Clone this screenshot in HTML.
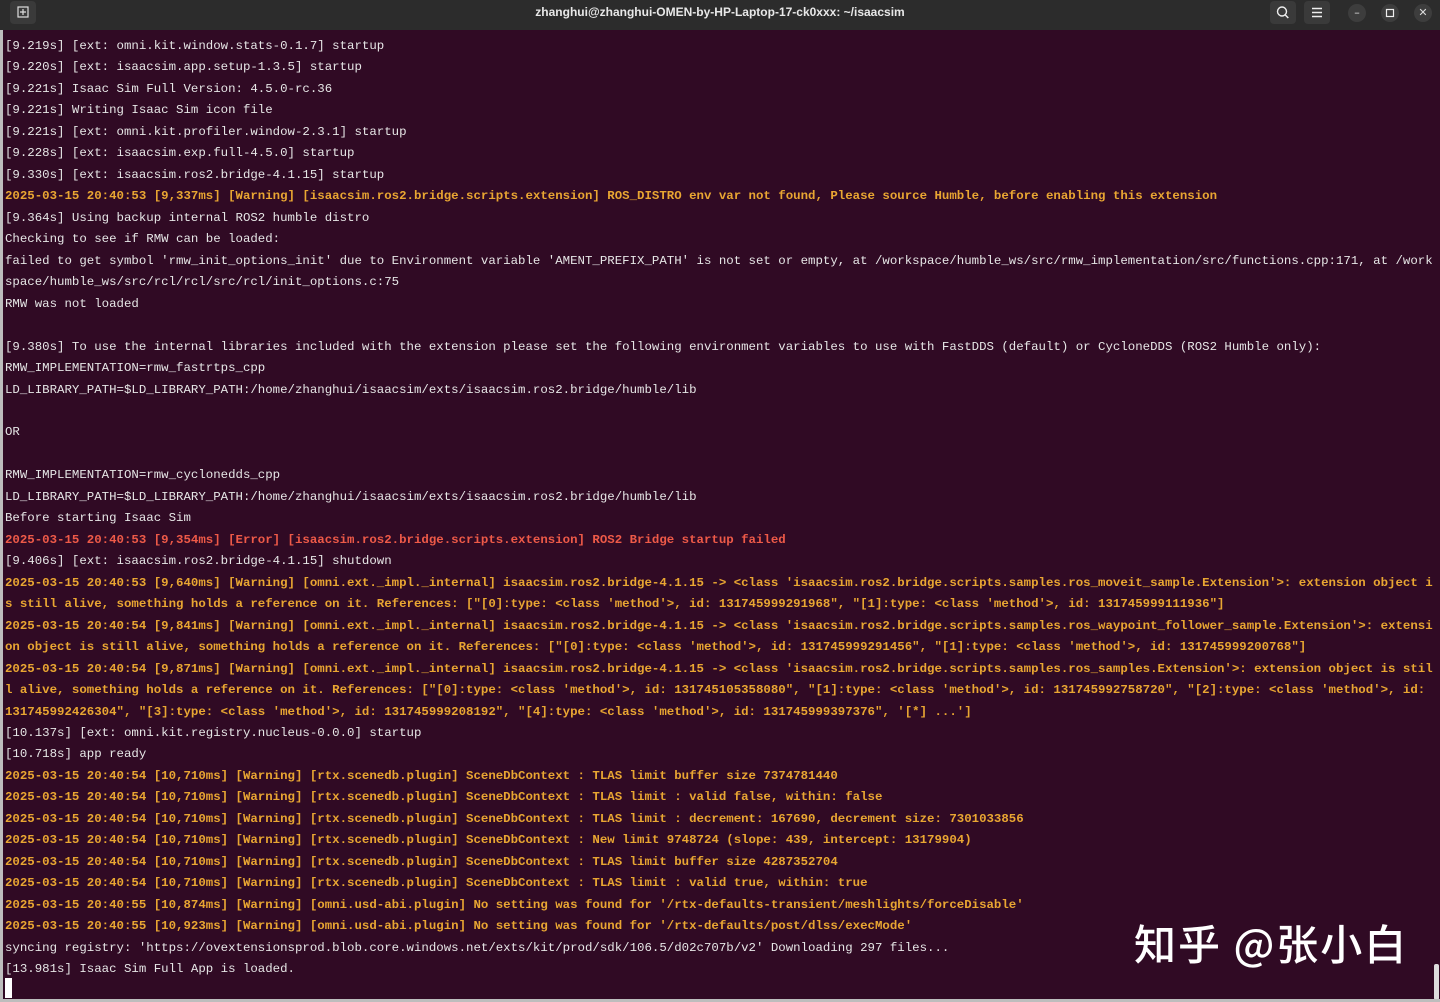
<!DOCTYPE html>
<html><head><meta charset="utf-8"><style>
html,body{margin:0;padding:0;}
body{width:1440px;height:1002px;background:#300a24;position:relative;overflow:hidden;font-family:"Liberation Mono","DejaVu Sans Mono",monospace;}
.tb{position:absolute;left:0;top:0;width:1440px;height:30px;background:#2c2c2c;}
.title{position:absolute;left:0;right:0;top:0;height:24px;line-height:24px;text-align:center;color:#e8e8e8;font:bold 12px "Liberation Sans","DejaVu Sans",sans-serif;}
.btn{position:absolute;top:1px;width:26px;height:23px;background:#3a3a3a;border-radius:4px;}
.cb{position:absolute;top:4px;width:18px;height:18px;border-radius:50%;background:#3d3d3d;color:#ddd;font:11px "DejaVu Sans",sans-serif;text-align:center;line-height:18px;}
.term{position:absolute;left:5px;top:36px;font-size:12.4px;line-height:21.47px;color:#e6e6e6;white-space:pre;}
.w{color:#e9a632;font-weight:bold;}
.e{color:#ee5a48;font-weight:bold;}
.edge{position:absolute;left:0;top:30px;width:3px;height:972px;background:#bdbdbd;}
.wm{position:absolute;left:1134px;top:912px;color:#fff;font:500 42px "Noto Sans CJK SC","WenQuanYi Zen Hei",sans-serif;letter-spacing:2px;}
</style></head><body>
<div class="tb">
<div class="btn" style="left:10px;"><svg width="26" height="23"><rect x="8" y="6" width="10" height="10" fill="none" stroke="#ddd" stroke-width="1.2"/><path d="M13 8v6M10 11h6" stroke="#ddd" stroke-width="1.2"/></svg></div>
<div class="title" style="top:0px;line-height:25px;">zhanghui@zhanghui-OMEN-by-HP-Laptop-17-ck0xxx: ~/isaacsim</div>
<div class="btn" style="left:1270px;"><svg width="26" height="23"><circle cx="12" cy="10.5" r="4.5" fill="none" stroke="#eee" stroke-width="1.4"/><path d="M15.3 14l3 3" stroke="#eee" stroke-width="1.5"/></svg></div>
<div class="btn" style="left:1304px;"><svg width="26" height="23"><path d="M8 7.5h10M8 11.5h10M8 15.5h10" stroke="#eee" stroke-width="1.4"/></svg></div>
<div class="cb" style="left:1348px;">–</div>
<div class="cb" style="left:1381px;"><svg width="18" height="18"><rect x="5.5" y="5.5" width="7" height="7" fill="none" stroke="#eee" stroke-width="1.2"/></svg></div>
<div class="cb" style="left:1414px;">✕</div>
</div>
<div class="edge"></div>
<div class="term">[9.219s] [ext: omni.kit.window.stats-0.1.7] startup
[9.220s] [ext: isaacsim.app.setup-1.3.5] startup
[9.221s] Isaac Sim Full Version: 4.5.0-rc.36
[9.221s] Writing Isaac Sim icon file
[9.221s] [ext: omni.kit.profiler.window-2.3.1] startup
[9.228s] [ext: isaacsim.exp.full-4.5.0] startup
[9.330s] [ext: isaacsim.ros2.bridge-4.1.15] startup
<span class="w">2025-03-15 20:40:53 [9,337ms] [Warning] [isaacsim.ros2.bridge.scripts.extension] ROS_DISTRO env var not found, Please source Humble, before enabling this extension</span>
[9.364s] Using backup internal ROS2 humble distro
Checking to see if RMW can be loaded:
failed to get symbol 'rmw_init_options_init' due to Environment variable 'AMENT_PREFIX_PATH' is not set or empty, at /workspace/humble_ws/src/rmw_implementation/src/functions.cpp:171, at /work
space/humble_ws/src/rcl/rcl/src/rcl/init_options.c:75
RMW was not loaded

[9.380s] To use the internal libraries included with the extension please set the following environment variables to use with FastDDS (default) or CycloneDDS (ROS2 Humble only):
RMW_IMPLEMENTATION=rmw_fastrtps_cpp
LD_LIBRARY_PATH=$LD_LIBRARY_PATH:/home/zhanghui/isaacsim/exts/isaacsim.ros2.bridge/humble/lib

OR

RMW_IMPLEMENTATION=rmw_cyclonedds_cpp
LD_LIBRARY_PATH=$LD_LIBRARY_PATH:/home/zhanghui/isaacsim/exts/isaacsim.ros2.bridge/humble/lib
Before starting Isaac Sim
<span class="e">2025-03-15 20:40:53 [9,354ms] [Error] [isaacsim.ros2.bridge.scripts.extension] ROS2 Bridge startup failed</span>
[9.406s] [ext: isaacsim.ros2.bridge-4.1.15] shutdown
<span class="w">2025-03-15 20:40:53 [9,640ms] [Warning] [omni.ext._impl._internal] isaacsim.ros2.bridge-4.1.15 -&gt; &lt;class 'isaacsim.ros2.bridge.scripts.samples.ros_moveit_sample.Extension'&gt;: extension object i
s still alive, something holds a reference on it. References: ["[0]:type: &lt;class 'method'&gt;, id: 131745999291968", "[1]:type: &lt;class 'method'&gt;, id: 131745999111936"]
2025-03-15 20:40:54 [9,841ms] [Warning] [omni.ext._impl._internal] isaacsim.ros2.bridge-4.1.15 -&gt; &lt;class 'isaacsim.ros2.bridge.scripts.samples.ros_waypoint_follower_sample.Extension'&gt;: extensi
on object is still alive, something holds a reference on it. References: ["[0]:type: &lt;class 'method'&gt;, id: 131745999291456", "[1]:type: &lt;class 'method'&gt;, id: 131745999200768"]
2025-03-15 20:40:54 [9,871ms] [Warning] [omni.ext._impl._internal] isaacsim.ros2.bridge-4.1.15 -&gt; &lt;class 'isaacsim.ros2.bridge.scripts.samples.ros_samples.Extension'&gt;: extension object is stil
l alive, something holds a reference on it. References: ["[0]:type: &lt;class 'method'&gt;, id: 131745105358080", "[1]:type: &lt;class 'method'&gt;, id: 131745992758720", "[2]:type: &lt;class 'method'&gt;, id:
131745992426304", "[3]:type: &lt;class 'method'&gt;, id: 131745999208192", "[4]:type: &lt;class 'method'&gt;, id: 131745999397376", '[*] ...']</span>
[10.137s] [ext: omni.kit.registry.nucleus-0.0.0] startup
[10.718s] app ready
<span class="w">2025-03-15 20:40:54 [10,710ms] [Warning] [rtx.scenedb.plugin] SceneDbContext : TLAS limit buffer size 7374781440
2025-03-15 20:40:54 [10,710ms] [Warning] [rtx.scenedb.plugin] SceneDbContext : TLAS limit : valid false, within: false
2025-03-15 20:40:54 [10,710ms] [Warning] [rtx.scenedb.plugin] SceneDbContext : TLAS limit : decrement: 167690, decrement size: 7301033856
2025-03-15 20:40:54 [10,710ms] [Warning] [rtx.scenedb.plugin] SceneDbContext : New limit 9748724 (slope: 439, intercept: 13179904)
2025-03-15 20:40:54 [10,710ms] [Warning] [rtx.scenedb.plugin] SceneDbContext : TLAS limit buffer size 4287352704
2025-03-15 20:40:54 [10,710ms] [Warning] [rtx.scenedb.plugin] SceneDbContext : TLAS limit : valid true, within: true
2025-03-15 20:40:55 [10,874ms] [Warning] [omni.usd-abi.plugin] No setting was found for '/rtx-defaults-transient/meshlights/forceDisable'
2025-03-15 20:40:55 [10,923ms] [Warning] [omni.usd-abi.plugin] No setting was found for '/rtx-defaults/post/dlss/execMode'</span>
syncing registry: 'https://ovextensionsprod.blob.core.windows.net/exts/kit/prod/sdk/106.5/d02c707b/v2' Downloading 297 files...
[13.981s] Isaac Sim Full App is loaded.
</div>
<div style="position:absolute;left:5px;top:978px;width:7px;height:20px;background:#fff;"></div>
<div style="position:absolute;left:1434px;top:964px;width:5px;height:36px;background:#ddd;border-radius:2px;"></div>
<div style="position:absolute;left:0;top:999px;width:1440px;height:3px;background:#bdbdbd;"></div>
<div class="wm">知乎 @张小白</div>
</body></html>
